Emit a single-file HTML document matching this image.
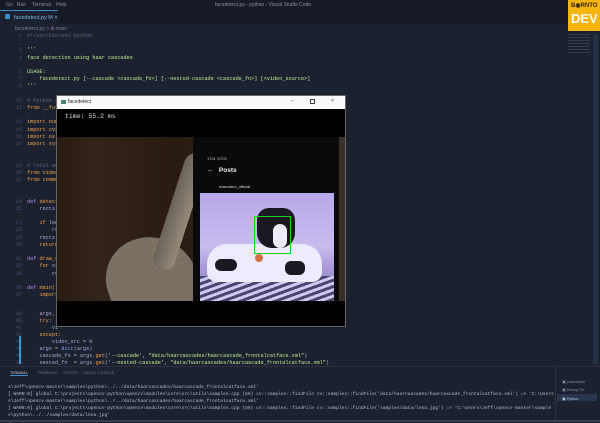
<!DOCTYPE html>
<html><head><meta charset="utf-8"><style>
*{margin:0;padding:0;box-sizing:border-box}
body{width:600px;height:422px;overflow:hidden;background:#1c2130;position:relative;font-family:"Liberation Mono",monospace;}
.abs{position:absolute}
.menu{left:0;top:0;width:600px;height:10px;background:#171b26;color:#8a90a0;font:5px "Liberation Sans",sans-serif;}
.menu span{position:absolute;top:2px}
.tabs{left:0;top:10px;width:600px;height:14px;background:#171b26}
.tab{left:0;top:10px;width:58px;height:14px;background:#1c2130;border-top:1px solid #3a8fd0;color:#7fb6e0;font:5.5px "Liberation Sans",sans-serif;padding:4px 0 0 14px}
.bc{left:15px;top:26px;color:#7a8090;font:5px "Liberation Sans",sans-serif}
.code{left:0;top:33px;font-size:5.2px;line-height:7.2px;white-space:pre;color:#a6accd}
.ln{position:absolute;left:8px;width:14px;text-align:right;color:#4a5168}
.tx{position:absolute;left:27px}
.c{color:#5d6680}.s{color:#c3e88d}.k{color:#f0a040}.p{color:#b58bf0}.f{color:#82aaff}
.win{left:56px;top:95px;width:290px;height:232px;background:#000;border:1px solid #666;overflow:hidden}
.title{left:0;top:0;width:288px;height:13px;background:#fafafa;font:5px "Liberation Sans",sans-serif;color:#222}
.term{left:0;top:366px;width:600px;height:56px;background:#1c2130;border-top:1px solid #2c3244}
.tl{position:absolute;left:8px;font-size:4.6px;color:#b8bcc8;white-space:pre}
</style></head><body>
<div class="abs menu"><span style="left:6px">Go</span><span style="left:17px">Run</span><span style="left:32px">Terminal</span><span style="left:56px">Help</span><span style="left:215px">facedetect.py - python - Visual Studio Code</span></div>
<div class="abs tabs"></div>
<div class="abs tab">facedetect.py M ×</div>
<div class="abs" style="left:5px;top:14px;width:5px;height:5px;background:#3a8fd0;border-radius:1px"></div>
<div class="abs bc">facedetect.py &gt; <span style="color:#b58bf0">⊙</span> main</div>
<div class="abs code">
<div class="ln" style="top:0">1</div><div class="tx c" style="top:0">#!/usr/bin/env python</div>
<div class="ln" style="top:14.4px">3</div><div class="tx s" style="top:14.4px">'''</div>
<div class="ln" style="top:21.6px">4</div><div class="tx s" style="top:21.6px">face detection using haar cascades</div>
<div class="ln" style="top:36px">6</div><div class="tx s" style="top:36px">USAGE:</div>
<div class="ln" style="top:43.2px">7</div><div class="tx s" style="top:43.2px">    facedetect.py [--cascade &lt;cascade_fn&gt;] [--nested-cascade &lt;cascade_fn&gt;] [&lt;video_source&gt;]</div>
<div class="ln" style="top:50.4px">8</div><div class="tx s" style="top:50.4px">'''</div>
<div class="ln" style="top:64.8px">10</div><div class="tx c" style="top:64.8px"># Python 2/3</div>
<div class="ln" style="top:72px">11</div><div class="tx k" style="top:72px">from __future__</div>
<div class="ln" style="top:86.4px">13</div><div class="tx k" style="top:86.4px">import numpy</div>
<div class="ln" style="top:93.6px">14</div><div class="tx k" style="top:93.6px">import cv2</div>
<div class="ln" style="top:100.8px">15</div><div class="tx k" style="top:100.8px">import os</div>
<div class="ln" style="top:108px">16</div><div class="tx k" style="top:108px">import sys</div>
<div class="ln" style="top:129.6px">19</div><div class="tx c" style="top:129.6px"># local modules</div>
<div class="ln" style="top:136.8px">20</div><div class="tx k" style="top:136.8px">from video</div>
<div class="ln" style="top:144px">21</div><div class="tx k" style="top:144px">from common</div>
<div class="ln" style="top:165.6px">24</div><div class="tx" style="top:165.6px"><span class="p">def</span> <span class="k">detect</span></div>
<div class="ln" style="top:172.8px">25</div><div class="tx" style="top:172.8px">    rects</div>
<div class="ln" style="top:187.2px">27</div><div class="tx" style="top:187.2px">    <span class="k">if</span> len</div>
<div class="ln" style="top:194.4px">28</div><div class="tx" style="top:194.4px">        re</div>
<div class="ln" style="top:201.6px">29</div><div class="tx" style="top:201.6px">    rects</div>
<div class="ln" style="top:208.8px">30</div><div class="tx k" style="top:208.8px">    return</div>
<div class="ln" style="top:223.2px">32</div><div class="tx" style="top:223.2px"><span class="p">def</span> <span class="k">draw_r</span></div>
<div class="ln" style="top:230.4px">33</div><div class="tx" style="top:230.4px">    <span class="k">for</span> x1</div>
<div class="ln" style="top:237.6px">34</div><div class="tx" style="top:237.6px">        cv</div>
<div class="ln" style="top:252px">36</div><div class="tx" style="top:252px"><span class="p">def</span> <span class="k">main()</span></div>
<div class="ln" style="top:259.2px">37</div><div class="tx k" style="top:259.2px">    import</div>
<div class="ln" style="top:278px">39</div><div class="tx" style="top:278px">    args,</div>
<div class="ln" style="top:285px">40</div><div class="tx k" style="top:285px">    try:</div>
<div class="ln" style="top:292px">41</div><div class="tx" style="top:292px">        vi</div>
<div class="ln" style="top:299px">42</div><div class="tx k" style="top:299px">    except:</div>
<div class="ln" style="top:306px">43</div><div class="tx" style="top:306px">        video_src = 0</div>
<div class="ln" style="top:313px">44</div><div class="tx" style="top:313px">    args = <span class="f">dict</span>(args)</div>
<div class="ln" style="top:320px">45</div><div class="tx" style="top:320px">    cascade_fn = args.<span class="k">get</span>(<span class="s">'--cascade', "data/haarcascades/haarcascade_frontalcatface.xml"</span>)</div>
<div class="ln" style="top:327px">46</div><div class="tx" style="top:327px">    nested_fn  = args.<span class="k">get</span>(<span class="s">'--nested-cascade', "data/haarcascades/haarcascade_frontalcatface.xml"</span>)</div>
</div>
<div class="abs" style="left:19px;top:336px;width:1.5px;height:28px;background:#3a9bd0"></div>
<div class="abs" style="left:568px;top:34px;width:22px;height:20px;background:repeating-linear-gradient(#3a4258 0 1px,transparent 1px 3px);opacity:.8"></div>
<div class="abs" style="left:593px;top:34px;width:5px;height:330px;background:#283044"></div>
<div class="abs" style="left:568px;top:0;width:32px;height:31px;background:#f6b50e;color:#fff;font:bold 13px 'Liberation Sans',sans-serif"><span style="position:absolute;left:3px;top:3px;font-size:6px;color:#3a2a00;line-height:6px">B◉RNTO</span><span style="position:absolute;left:3px;top:12px;font-size:13px;line-height:13px">DEV</span></div>

<div class="abs win">
<div class="abs title"><span style="position:absolute;left:4px;top:4px;width:5px;height:4px;background:#4a8a6a"></span><span style="position:absolute;left:11px;top:3px">facedetect</span><span style="position:absolute;left:234px;top:2px">–</span><span style="position:absolute;left:253px;top:3px;width:5px;height:5px;border:1px solid #444"></span><span style="position:absolute;left:274px;top:2px">×</span></div>
<div class="abs" style="left:8px;top:17px;color:#ddd;font-size:6.5px">time: 55.2 ms</div>
<div class="abs" style="left:0;top:41px;width:288px;height:164px;overflow:hidden;background:linear-gradient(90deg,#2a1c12 0,#32241a 40px,#281b12 120px,#3a3028 200px)">
<div class="abs" style="left:50px;top:99px;width:90px;height:90px;background:#7a7064;border-radius:50% 60% 0 0;transform:rotate(-20deg)"></div>
<div class="abs" style="left:112px;top:14px;width:22px;height:120px;background:linear-gradient(90deg,#6a6258,#958a7c);border-radius:11px 11px 8px 8px;transform:rotate(18deg)"></div>
</div>
<div class="abs" style="left:136px;top:41px;width:146px;height:164px;background:#0a0a0c"></div>
<div class="abs" style="left:150px;top:60px;color:#ccc;font:4px 'Liberation Sans',sans-serif">1701 ⊙⊙⊙</div>
<div class="abs" style="left:150px;top:71px;color:#eee;font:bold 6.5px 'Liberation Sans',sans-serif">←&nbsp;&nbsp;&nbsp;Posts</div>
<div class="abs" style="left:162px;top:88px;color:#ddd;font:4px 'Liberation Sans',sans-serif">maevdum_official</div>
<div class="abs" style="left:143px;top:97px;width:134px;height:108px;background:linear-gradient(180deg,#b8a8e8 0,#c8bcee 50%,#a898d8 70%,#8a80b0 100%)"></div>
<div class="abs" style="left:143px;top:180px;width:134px;height:25px;background:repeating-linear-gradient(160deg,#4a4670 0 3px,#d0c8f0 3px 6px)"></div>
<div class="abs" style="left:150px;top:148px;width:115px;height:38px;background:#eeeaff;border-radius:20px 20px 10px 10px"></div>
<div class="abs" style="left:200px;top:112px;width:38px;height:40px;background:#1a1820;border-radius:12px 12px 15px 15px"></div>
<div class="abs" style="left:216px;top:128px;width:14px;height:24px;background:#eeeaf8;border-radius:7px"></div>
<div class="abs" style="left:158px;top:163px;width:22px;height:12px;background:#1a1820;border-radius:6px"></div>
<div class="abs" style="left:228px;top:165px;width:20px;height:14px;background:#1a1820;border-radius:6px"></div>
<div class="abs" style="left:197px;top:120px;width:37px;height:38px;border:1.5px solid #1fd01f"></div>
<div class="abs" style="left:198px;top:158px;width:8px;height:8px;background:#d07040;border-radius:4px"></div>
</div>

<div class="abs term">
<div class="abs" style="left:10px;top:4px;color:#c8ccd8;font:3.5px 'Liberation Sans',sans-serif;border-bottom:1px solid #3a8fd0">TERMINAL</div>
<div class="abs" style="left:38px;top:4px;color:#6a7088;font:3.5px 'Liberation Sans',sans-serif">PROBLEMS&nbsp;&nbsp;&nbsp;&nbsp;&nbsp;&nbsp;OUTPUT&nbsp;&nbsp;&nbsp;&nbsp;&nbsp;&nbsp;DEBUG CONSOLE</div>
<div class="tl" style="top:18px">s\Jeff\opencv-master\samples\python\../../data/haarcascades/haarcascade_frontalcatface.xml'</div>
<div class="tl" style="top:25px">[ WARN:0] global C:\projects\opencv-python\opencv\modules\core\src\utils\samples.cpp (59) cv::samples::findFile cv::samples::findFile('data/haarcascades/haarcascade_frontalcatface.xml') =&gt; 'C:\Users</div>
<div class="tl" style="top:32px">s\Jeff\opencv-master\samples\python\../../data/haarcascades/haarcascade_frontalcatface.xml'</div>
<div class="tl" style="top:39px">[ WARN:0] global C:\projects\opencv-python\opencv\modules\core\src\utils\samples.cpp (59) cv::samples::findFile cv::samples::findFile('samples/data/lena.jpg') =&gt; 'C:\Users\Jeff\opencv-master\sample</div>
<div class="tl" style="top:46px">s\python\../../samples/data/lena.jpg'</div>
<div class="abs" style="left:555px;top:0;width:45px;height:56px;border-left:1px solid #2c3244;background:#1c2130"></div>
<div class="abs" style="left:562px;top:11px;color:#8a90a0;font:3.8px 'Liberation Sans',sans-serif;line-height:8px">▣ powershell<br>▣ Debug Ter..<br></div>
<div class="abs" style="left:557px;top:27px;width:40px;height:7px;background:#2a3550;color:#c8ccd8;font:3.8px 'Liberation Sans',sans-serif;padding:1.5px 0 0 5px">▣ Python</div>
</div>
<div class="abs" style="left:0;top:420px;width:600px;height:2px;background:#3a3f4c"></div>
</body></html>
